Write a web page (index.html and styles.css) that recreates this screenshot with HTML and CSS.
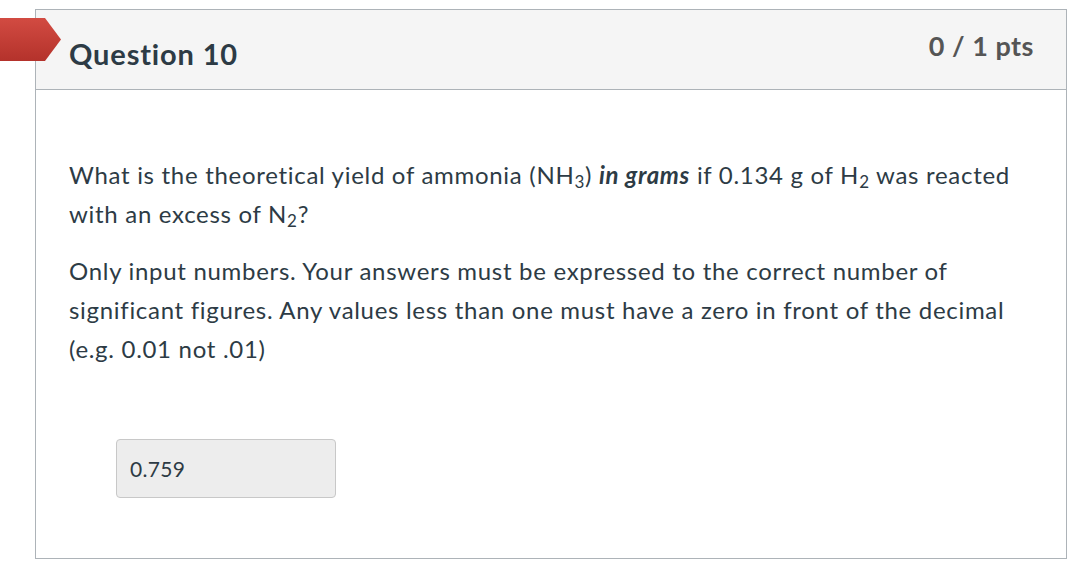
FILE: index.html
```html
<!DOCTYPE html>
<html>
<head>
<meta charset="utf-8">
<link rel="stylesheet" href="styles.css">
</head>
<body>
<div class="page">
  <div class="flag"></div>
  <div class="card">
    <div class="header">
      <h2 class="title">Question 10</h2>
      <div class="pts">0 / 1 pts</div>
    </div>
    <div class="body">
      <p class="q1">What is the theoretical yield of ammonia (NH<sub>3</sub>) <strong><em>in grams</em></strong> if 0.134 g of H<sub>2</sub> was reacted with an excess of N<sub>2</sub>?</p>
      <p class="q2">Only input numbers. Your answers must be expressed to the correct number of significant figures. Any values less than one must have a zero in front of the decimal (e.g. 0.01 not .01)</p>
      <div class="answer">0.759</div>
    </div>
  </div>
</div>
</body>
</html>
```
FILE: styles.css
```css
html, body {
  margin: 0;
  padding: 0;
  background: #fff;
}
body {
  font-family: Lato, "Noto Sans", sans-serif;
  color: #2d3b45;
}
.page {
  position: relative;
  padding: 9px 20px 12px 35px;
}
.flag {
  position: absolute;
  left: 0;
  top: 18px;
  width: 61px;
  height: 43px;
  background: linear-gradient(#d24b42, #b4322b);
  clip-path: polygon(0 0, 45px 0, 61px 50%, 45px 100%, 0 100%);
}
.card {
  width: 1032px;
  height: 550px;
  border: 1px solid #adb3b8;
  box-sizing: border-box;
  display: flex;
  flex-direction: column;
}
.header {
  height: 80px;
  flex: none;
  background: #f5f5f5;
  border-bottom: 1px solid #adb3b8;
  display: flex;
  justify-content: space-between;
  align-items: flex-start;
  padding: 0 32px 0 33px;
  box-sizing: border-box;
}
.title {
  margin: 27px 0 0;
  font-size: 29px;
  letter-spacing: 0.85px;
  font-weight: 700;
  color: #2d3b45;
  line-height: 34px;
}
.pts {
  margin-top: 19px;
  font-size: 27px;
  letter-spacing: 0.5px;
  font-weight: 700;
  color: #555;
  line-height: 34px;
}
.body {
  padding: 65px 30px 0 33px;
  font-size: 24px;
  letter-spacing: 0.7px;
  line-height: 39px;
}
.body p {
  margin: 0 0 18px;
}
.body sub {
  font-size: 17px;
  line-height: 0;
  vertical-align: -4px;
}
.body strong {
  font-weight: 700;
}
.answer {
  margin: 71px 0 0 47px;
  width: 220px;
  height: 59px;
  box-sizing: border-box;
  background: #ededed;
  border: 1px solid #c8c8c8;
  border-radius: 4px;
  font-size: 21px;
  letter-spacing: 0.3px;
  line-height: 57px;
  padding-left: 13px;
}
```
